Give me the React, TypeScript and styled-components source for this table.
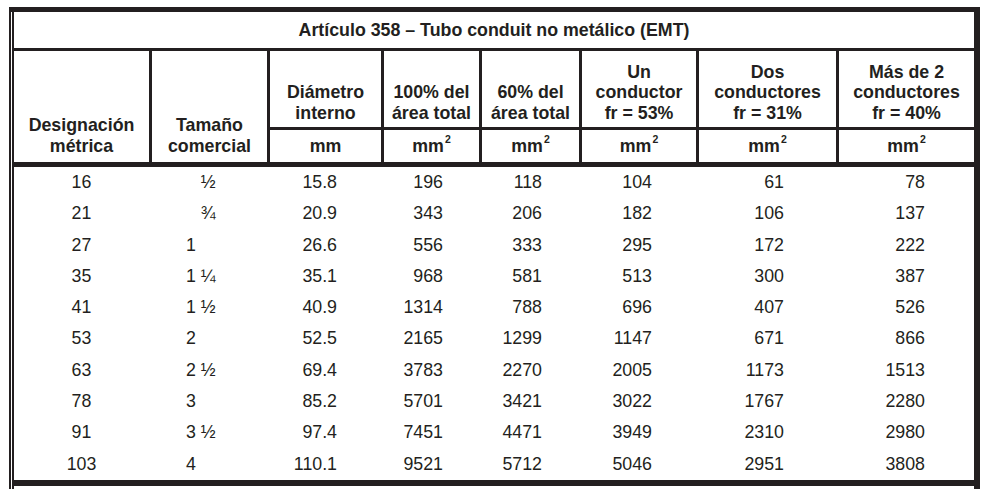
import React from "react";
import styled, { createGlobalStyle } from "styled-components";

const INK = "#231f20";
const COLS = "138px 118px 114px 98px 100px 117px 140px 135px";

const Global = createGlobalStyle`
  html, body { margin: 0; padding: 0; background: #ffffff; }
  body {
    font-family: "Liberation Sans", Arial, sans-serif;
    color: ${INK};
    font-size: 17.8px;
  }
`;

const Page = styled.div`
  box-sizing: border-box;
  height: 489px;
  padding: 7px 0 0 9px;
  overflow: hidden;
`;

const Frame = styled.div`
  box-sizing: border-box;
  width: 971px;
  height: 482px;
  border-top: 5px solid ${INK};
  border-right: 6px solid ${INK};
`;

const Inner = styled.div`
  box-sizing: border-box;
  height: 100%;
  border-left: 5px double ${INK};
  display: flex;
  flex-direction: column;
`;

const Title = styled.div`
  height: 36px;
  line-height: 36px;
  border-bottom: 3px solid ${INK};
  text-align: center;
  font-weight: bold;
`;

const Header = styled.div`
  display: grid;
  grid-template-columns: ${COLS};
  grid-template-rows: 79px 32px;
  border-bottom: 5px solid ${INK};
  font-weight: bold;
`;

const HeadCell = styled.div<{ $last?: boolean; $span?: boolean; $pb: number; $lh: number; $top?: boolean }>`
  box-sizing: border-box;
  grid-row: ${(p) => (p.$span ? "span 2" : "auto")};
  display: flex;
  flex-direction: column;
  justify-content: flex-end;
  align-items: center;
  text-align: center;
  line-height: ${(p) => p.$lh}px;
  padding-bottom: ${(p) => p.$pb}px;
  border-right: ${(p) => (p.$last ? "none" : `3px solid ${INK}`)};
  border-bottom: ${(p) => (p.$top ? `3px solid ${INK}` : "none")};
  white-space: nowrap;
`;

const Sup = styled.sup`
  font-size: 10.5px;
  vertical-align: 9px;
  line-height: 0;
  margin-left: 1px;
`;

const Body = styled.div`
  border-bottom: 6px solid ${INK};
`;

const Row = styled.div`
  display: grid;
  grid-template-columns: ${COLS};
  height: 31.3px;
  line-height: 31.3px;
`;

const Cell = styled.div<{ $align: "left" | "right" | "center"; $pl?: number; $pr?: number }>`
  text-align: ${(p) => p.$align};
  padding-left: ${(p) => p.$pl ?? 0}px;
  padding-right: ${(p) => p.$pr ?? 0}px;
  white-space: nowrap;
`;

const Whole = styled.span`
  display: inline-block;
  width: 0.834em;
`;

const headers: { lines: string[] }[] = [
  { lines: ["Diámetro", "interno"] },
  { lines: ["100% del", "área total"] },
  { lines: ["60% del", "área total"] },
  { lines: ["Un", "conductor", "fr = 53%"] },
  { lines: ["Dos", "conductores", "fr = 31%"] },
  { lines: ["Más de 2", "conductores", "fr = 40%"] },
];

const units = ["mm", "mm2", "mm2", "mm2", "mm2", "mm2"];

const rows: [string, string, string, string, string, string, string, string, string][] = [
  ["16", "", "½", "15.8", "196", "118", "104", "61", "78"],
  ["21", "", "¾", "20.9", "343", "206", "182", "106", "137"],
  ["27", "1", "", "26.6", "556", "333", "295", "172", "222"],
  ["35", "1", "¼", "35.1", "968", "581", "513", "300", "387"],
  ["41", "1", "½", "40.9", "1314", "788", "696", "407", "526"],
  ["53", "2", "", "52.5", "2165", "1299", "1147", "671", "866"],
  ["63", "2", "½", "69.4", "3783", "2270", "2005", "1173", "1513"],
  ["78", "3", "", "85.2", "5701", "3421", "3022", "1767", "2280"],
  ["91", "3", "½", "97.4", "7451", "4471", "3949", "2310", "2980"],
  ["103", "4", "", "110.1", "9521", "5712", "5046", "2951", "3808"],
];

const rightPads = [47, 39, 40, 47, 55, 49];

export default function App() {
  return (
    <>
      <Global />
      <Page>
        <Frame>
          <Inner>
            <Title>Artículo 358 – Tubo conduit no metálico (EMT)</Title>
            <Header>
              <HeadCell $span $pb={5} $lh={21}>
                <span>Designación</span>
                <span>métrica</span>
              </HeadCell>
              <HeadCell $span $pb={5} $lh={21}>
                <span>Tamaño</span>
                <span>comercial</span>
              </HeadCell>
              {headers.map((h, i) => (
                <HeadCell key={i} $top $pb={4} $lh={20.5} $last={i === headers.length - 1}>
                  {h.lines.map((l) => (
                    <span key={l}>{l}</span>
                  ))}
                </HeadCell>
              ))}
              {units.map((u, i) => (
                <HeadCell key={"u" + i} $pb={0} $lh={32} $last={i === units.length - 1}>
                  {u === "mm2" ? (
                    <span>
                      mm<Sup>2</Sup>
                    </span>
                  ) : (
                    <span>{u}</span>
                  )}
                </HeadCell>
              ))}
            </Header>
            <Body>
              {rows.map((r) => (
                <Row key={r[0]}>
                  <Cell $align="center" $pr={3}>
                    {r[0]}
                  </Cell>
                  <Cell $align="left" $pl={34}>
                    <Whole>{r[1]}</Whole>
                    {r[2]}
                  </Cell>
                  {r.slice(3).map((v, i) => (
                    <Cell key={i} $align="right" $pr={rightPads[i]}>
                      {v}
                    </Cell>
                  ))}
                </Row>
              ))}
            </Body>
          </Inner>
        </Frame>
      </Page>
    </>
  );
}
